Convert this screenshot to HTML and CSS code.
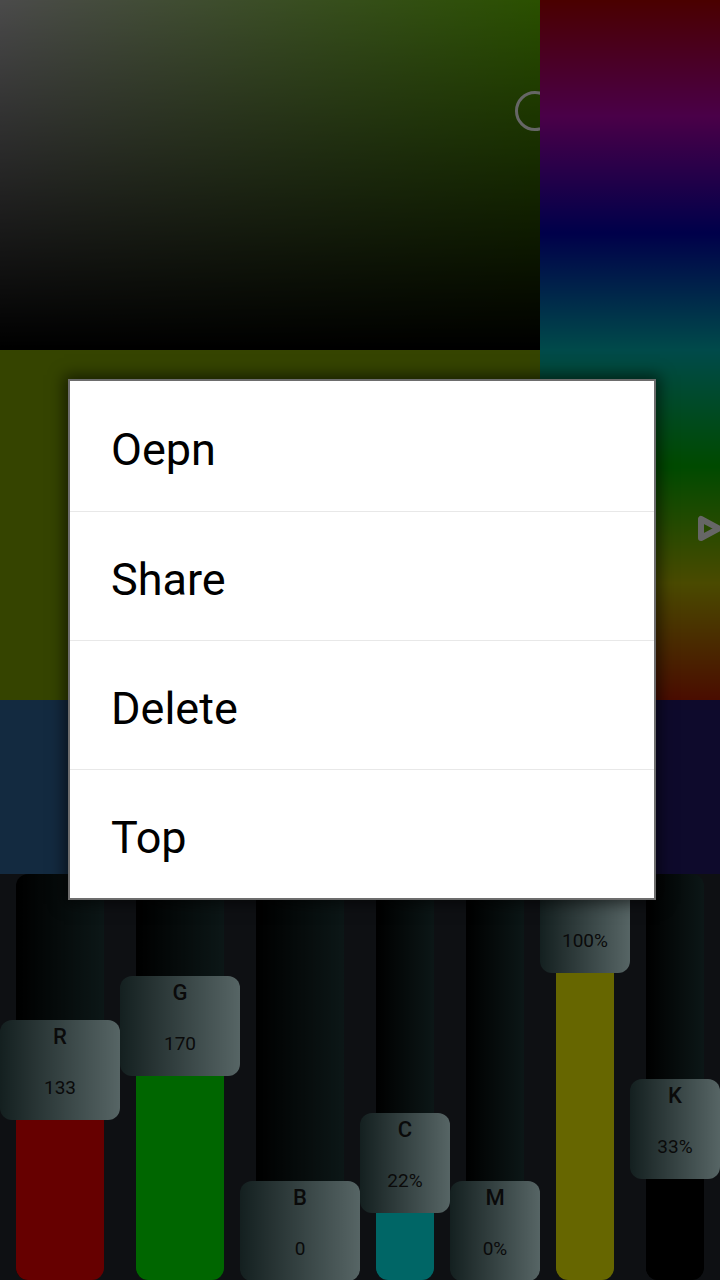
FILE: index.html
```html
<!DOCTYPE html>
<html lang="en">
<head>
  <meta charset="UTF-8">
  <meta name="viewport" content="width=device-width, initial-scale=1.0">
  <title>Color Picker</title>
  <link rel="stylesheet" href="styles.css">
</head>
<body>

  <div class="screen">

    <!-- Picker: saturation/value box, hue strip, current colour -->
    <div class="picker">
      <div class="sv-box">
        <span class="sv-cursor"></span>
      </div>
      <div class="hue-strip">
        <svg class="hue-cursor" width="28" height="28" viewBox="0 0 28 28">
          <polygon points="4,4 4,23 22,13.5" fill="none" stroke="#ffffff" stroke-width="6" stroke-linejoin="round"/>
        </svg>
      </div>
      <div class="preview"></div>
    </div>

    <!-- Saved colours -->
    <div class="history">
      <div class="swatch swatch-blue"></div>
      <div class="swatch swatch-indigo"></div>
    </div>

    <!-- Channel sliders -->
    <div class="sliders">
      <div class="slider wide" style="--v: 0.5216">
        <div class="track"><div class="fill red"></div></div>
        <div class="thumb"><span class="name">R</span><span class="value">133</span></div>
      </div>
      <div class="slider wide" style="--v: 0.6667">
        <div class="track"><div class="fill green"></div></div>
        <div class="thumb"><span class="name">G</span><span class="value">170</span></div>
      </div>
      <div class="slider wide" style="--v: 0">
        <div class="track"><div class="fill blue"></div></div>
        <div class="thumb"><span class="name">B</span><span class="value">0</span></div>
      </div>
      <div class="slider narrow" style="--v: 0.22">
        <div class="track"><div class="fill cyan"></div></div>
        <div class="thumb"><span class="name">C</span><span class="value">22%</span></div>
      </div>
      <div class="slider narrow" style="--v: 0">
        <div class="track"><div class="fill magenta"></div></div>
        <div class="thumb"><span class="name">M</span><span class="value">0%</span></div>
      </div>
      <div class="slider narrow" style="--v: 1">
        <div class="track"><div class="fill yellow"></div></div>
        <div class="thumb"><span class="name">Y</span><span class="value">100%</span></div>
      </div>
      <div class="slider narrow" style="--v: 0.33">
        <div class="track"><div class="fill black"></div></div>
        <div class="thumb"><span class="name">K</span><span class="value">33%</span></div>
      </div>
    </div>

    <!-- Context menu -->
    <div class="dim"></div>
    <ul class="menu">
      <li>Oepn</li>
      <li>Share</li>
      <li>Delete</li>
      <li>Top</li>
    </ul>

  </div>

</body>
</html>
```

FILE: styles.css
```css
body {
  margin: 0;
  padding: 0;
  background-color: #000;
  font-family: Roboto, "Noto Sans", sans-serif;
}

.screen {
  position: relative;
  width: 720px;
  height: 1280px;
  overflow: hidden;
  background-color: #232830;
}

/* picker */
.picker {
  display: grid;
  grid-template-columns: 540px 180px;
  grid-template-rows: 350px 350px;
}

.sv-box {
  position: relative;
  overflow: hidden;
  background:
    linear-gradient(to bottom, rgba(0, 0, 0, 0), #000),
    linear-gradient(to right, #bababa, #6ac800);
}

.sv-cursor {
  position: absolute;
  left: 515px;
  top: 91px;
  width: 34px;
  height: 34px;
  border: 3px solid #ffffff;
  border-radius: 50%;
}

.hue-strip {
  position: relative;
  grid-row: 1 / 3;
  grid-column: 2;
  overflow: hidden;
  background: linear-gradient(to bottom,
    #b90000 0%,
    #b900b4 16.6%,
    #0000b9 33.3%,
    #00b9b9 50%,
    #00b900 66.6%,
    #b9b900 83.3%,
    #b92000 100%);
}

.hue-cursor {
  position: absolute;
  left: 157px;
  top: 515px;
}

.preview {
  background-color: #85aa00;
}

/* history */
.history {
  display: flex;
  height: 174px;
}

.swatch {
  flex: 1;
}

.swatch-blue {
  background-color: #3069a0;
}

.swatch-indigo {
  background-color: #24196e;
}

/* sliders */
.sliders {
  display: flex;
  height: 406px;
}

.slider {
  position: relative;
  display: flex;
  flex-direction: column;
}

.slider.wide {
  width: 120px;
}

.slider.narrow {
  width: 90px;
}

.track {
  position: relative;
  flex: 1;
  margin: 0 16px;
  border-radius: 12px;
  overflow: hidden;
  background: linear-gradient(to right, #000, #1f3a3a);
}

.fill {
  position: absolute;
  left: 0;
  right: 0;
  bottom: 0;
  height: calc(308px * var(--v));
}

.fill.red { background-color: #ff0000; }
.fill.green { background-color: #00ff00; }
.fill.blue { background-color: #0000ff; }
.fill.cyan { background-color: #00ffff; }
.fill.magenta { background-color: #ff00ff; }
.fill.yellow { background-color: #ffff00; }
.fill.black { background-color: #000; }

.thumb {
  position: absolute;
  left: 0;
  right: 0;
  top: calc(307px - 308px * var(--v));
  height: 100px;
  border-radius: 12px;
  background: linear-gradient(to right, #335050, #d8fcfc);
  display: flex;
  flex-direction: column;
  align-items: center;
  color: #1a1a1a;
}

.thumb .name {
  font-size: 22px;
  font-weight: 500;
  line-height: 34px;
}

.thumb .value {
  margin-top: 17px;
  font-size: 19px;
  line-height: 34px;
}

/* dialog */
.dim {
  position: absolute;
  left: 0;
  top: 0;
  width: 100%;
  height: 100%;
  background-color: rgba(0, 0, 0, 0.6);
}

.menu {
  position: absolute;
  left: 68px;
  top: 379px;
  width: 584px;
  margin: 0;
  padding: 0;
  list-style: none;
  background-color: #fff;
  border: 2px solid #6d6d6d;
  box-shadow: 0 0 14px 4px rgba(0, 0, 0, 0.55);
}

.menu li {
  height: 129px;
  display: flex;
  align-items: center;
  padding: 6px 0 0 41px;
  box-sizing: border-box;
  font-size: 45px;
  color: #000;
  border-top: 1px solid #e8e8e8;
}

.menu li:first-child {
  height: 130px;
  border-top: none;
}
```
